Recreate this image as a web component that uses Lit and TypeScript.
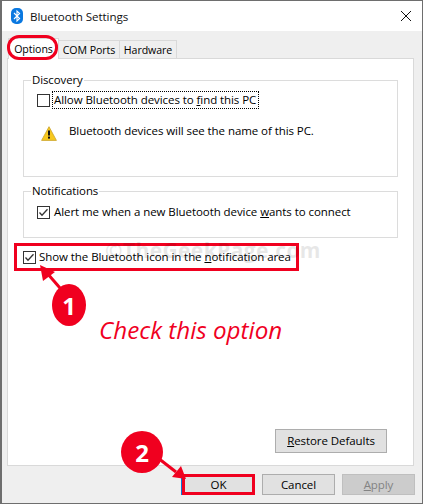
import { LitElement, html, css, svg } from "lit";
import { customElement } from "lit/decorators.js";

const check = svg`<svg class="tick" viewBox="0 0 13 13" width="13" height="13"><path d="M2.5 6.5 L5 9.3 L10.5 3.2" fill="none" stroke="#333" stroke-width="1.3"/></svg>`;

@customElement("app-root")
export class AppRoot extends LitElement {
  static styles = css`
    :host { display: block; position: relative; width: 423px; height: 504px; overflow: hidden; background: #fff;
      font-family: "Open Sans", "Noto Sans", sans-serif; font-size: 11.5px; color: #000; letter-spacing: -0.07px; }
    .win { box-sizing: border-box; width: 423px; height: 504px; display: flex; flex-direction: column;
      border: solid #6e6e6e; border-width: 1px 1px 1px 2px; background: #efefef; }
    .title { height: 30px; background: #fff; display: flex; align-items: center; padding: 0 11px 0 9px; gap: 7px; flex: none; }
    .title .t { font-size: 11.6px; flex: 1; color: #111; }
    .body { flex: 1; display: flex; flex-direction: column; padding: 8px 7px 7px 5px; }
    .tabs { display: flex; height: 19px; padding-left: 1px; flex: none; font-size: 10.6px; }
    .tab { box-sizing: border-box; border: 1px solid #d9d9d9; border-bottom: 0; background: #efefef; height: 19px; margin-top: 1px;
      display: flex; align-items: center; justify-content: center; margin-left: -1px; }
    .tab.sel { background: #fff; width: 51px; height: 21px; margin-top: -1px; margin-left: 0; position: relative; z-index: 1; margin-bottom: -1px; }
    .tab.c { width: 62px; }
    .tab.h { width: 58px; }
    .panel { box-sizing: border-box; width: 407px; height: 408px; background: #fff; border: 1px solid #d9d9d9; padding: 21px 15px 12px 15px; display: flex; flex-direction: column; flex: none; }
    .group { box-sizing: border-box; position: relative; width: 375px; border: 1px solid #dcdcdc; flex: none; }
    .legend { position: absolute; left: 7px; top: -9px; background: #fff; padding: 0 1px; font-size: 11.4px; line-height: 16px; }
    .d { height: 97px; padding: 13px 0 0 13px; }
    .n { height: 47px; margin-top: 14px; padding: 14px 0 0 13px; }
    .row { display: flex; align-items: center; height: 13px; gap: 4px; white-space: nowrap; }
    .lift { margin-bottom: 2px; }
    .box { box-sizing: border-box; width: 13px; height: 13px; border: 1px solid #333; background: #fff; flex: none; display: flex; }
    .tick { display: block; margin: -1px; flex: none; }
    .focus { outline: 1px dotted #000; outline-offset: 1px; padding: 0 1px 0 0; line-height: 14px; }
    .warn { display: flex; align-items: flex-start; gap: 12px; margin: 16px 0 0 4px; height: 20px; line-height: 16px; }
    .warn svg { margin-top: 3px; flex: none; }
    .show { box-sizing: border-box; width: 285px; height: 28px; margin: 5px 0 0 -9px; padding: 0 0 0 6px; border: 3px solid #f0001f; display: flex; align-items: center; gap: 3px; white-space: nowrap; flex: none; }
    u { text-decoration: underline; }
    .restore-row { flex: 1; display: flex; justify-content: flex-end; align-items: flex-end; padding-right: 11px; }
    .btn { box-sizing: border-box; display: flex; align-items: center; justify-content: center; background: #e1e1e1; border: 1px solid #adadad; }
    .restore { width: 112px; height: 24px; }
    .actions { flex: 1; display: flex; justify-content: flex-end; align-items: flex-start; gap: 7px; padding: 8px 0 0 0; }
    .actions .btn { width: 73px; height: 21px; }
    .ok { border: 3px solid #f0001f !important; box-shadow: -1px 0 0 #0a78d7; }
    .apply { background: #cccccc; border-color: #bfbfbf; color: #838383; }
    .overlay { position: absolute; inset: 0; pointer-events: none; z-index: 2; }
    .mark { position: absolute; left: 105px; top: 236px; font-size: 21px; font-weight: 700; color: #000; opacity: 0.09; white-space: nowrap; letter-spacing: 0.4px; }
    .oval { position: absolute; left: 7px; top: 35px; width: 51px; height: 25px; box-sizing: border-box; border: 3px solid #f0001f; border-radius: 12px; }
    .note { position: absolute; left: 99px; top: 314px; font-size: 24.2px; font-style: italic; color: #f0001f; white-space: nowrap; letter-spacing: 0; line-height: 32px; }
    .num { position: absolute; display: flex; align-items: center; justify-content: center; background: #f0001f; color: #fff; font-weight: 700; border-radius: 50%; font-size: 24px; letter-spacing: 0; }
    .n1 { left: 52px; top: 284px; width: 34px; height: 42px; }
    .n2 { left: 121px; top: 431px; width: 42px; height: 42px; }
    svg.arrows { position: absolute; left: 0; top: 0; }
  `;

  render() {
    return html`
      <div class="win">
        <div class="title">
          <svg width="12" height="16" viewBox="0 0 12 16"><rect width="12" height="16" rx="5" fill="#0a78e0"/><path d="M3 5 L8.6 10.6 L6 13 V3 L8.6 5.4 L3 11" fill="none" stroke="#fff" stroke-width="1.1"/></svg>
          <span class="t">Bluetooth Settings</span>
          <svg width="10" height="10" viewBox="0 0 10 10"><path d="M0 0 L10 10 M10 0 L0 10" stroke="#111" stroke-width="1"/></svg>
        </div>
        <div class="body">
          <div class="tabs">
            <div class="tab sel">Options</div>
            <div class="tab c">COM Ports</div>
            <div class="tab h">Hardware</div>
          </div>
          <div class="panel">
            <div class="group d">
              <div class="legend">Discovery</div>
              <div class="row"><span class="box"></span><span class="focus lift">Allow Bluetooth devices to <u>f</u>ind this PC</span></div>
              <div class="warn">
                <svg width="16" height="15" viewBox="0 0 16 15"><path d="M8 0.7 L15.4 14.4 H0.6 Z" fill="#f7c81e" stroke="#c9a227" stroke-width="0.8" stroke-linejoin="round"/><path d="M8 4.5 V9.6" stroke="#111" stroke-width="2"/><rect x="7" y="10.6" width="2" height="2" fill="#111"/></svg>
                <span>Bluetooth devices will see the name of this PC.</span>
              </div>
            </div>
            <div class="group n">
              <div class="legend">Notifications</div>
              <div class="row"><span class="box">${check}</span><span class="lift">Alert me when a new Bluetooth device <u>w</u>ants to connect</span></div>
            </div>
            <div class="show"><span class="box">${check}</span><span class="lift">Show the Bluetooth icon in the <u>n</u>otification area</span></div>
            <div class="restore-row"><div class="btn restore"><span class="lift"><u>R</u>estore Defaults</span></div></div>
          </div>
          <div class="actions">
            <div class="btn ok">OK</div>
            <div class="btn">Cancel</div>
            <div class="btn apply"><span><u>A</u>pply</span></div>
          </div>
        </div>
      </div>
      <div class="overlay">
        <div class="mark">©TheGeekPage.com</div>
        <div class="oval"></div>
        <svg class="arrows" width="423" height="504" viewBox="0 0 423 504">
          <path d="M60 288 L47 273" stroke="#f0001f" stroke-width="3" fill="none"/>
          <path d="M40 265 L55 272 L43 281 Z" fill="#f0001f"/>
          <path d="M158 458 L176 472" stroke="#f0001f" stroke-width="3" fill="none"/>
          <path d="M186 479 L172 477 L181 466 Z" fill="#f0001f"/>
        </svg>
        <div class="num n1">1</div>
        <div class="num n2">2</div>
        <div class="note">Check this option</div>
      </div>
    `;
  }
}
